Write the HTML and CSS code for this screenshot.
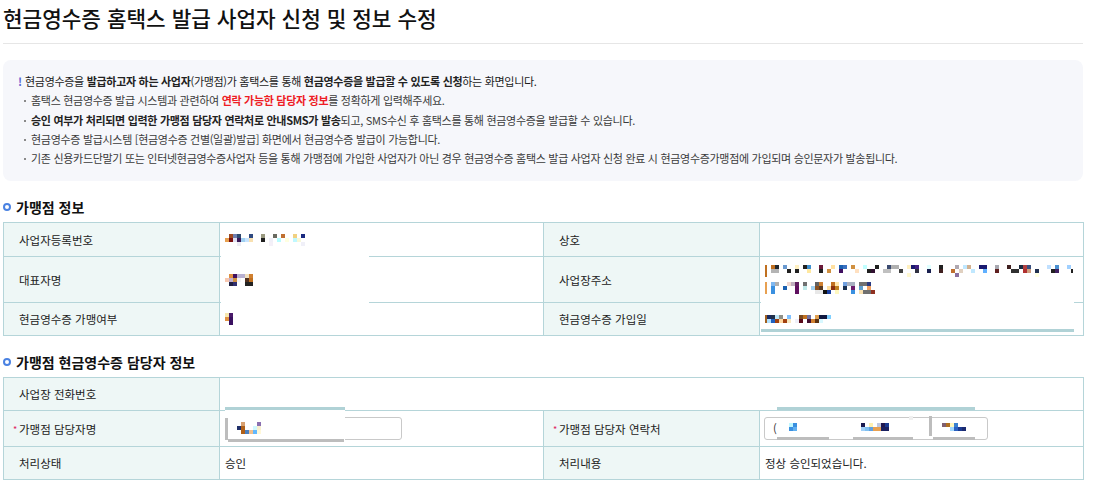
FILE: index.html
```html
<!DOCTYPE html>
<html lang="ko">
<head>
<meta charset="utf-8">
<title>현금영수증 홈택스 발급 사업자 신청 및 정보 수정</title>
<link rel="stylesheet" href="styles.css">
</head>
<body>
<div class="page">
  <h1 class="title">현금영수증 홈택스 발급 사업자 신청 및 정보 수정</h1>

  <div class="notice">
    <p class="lead"><span class="excl">!</span>현금영수증을 <b>발급하고자 하는 사업자</b>(가맹점)가 홈택스를 통해 <b>현금영수증을 발급할 수 있도록 신청</b>하는 화면입니다.</p>
    <ul class="bullets">
      <li>홈택스 현금영수증 발급 시스템과 관련하여 <b class="red">연락 가능한 담당자 정보</b>를 정확하게 입력해주세요.</li>
      <li><b>승인 여부가 처리되면 입력한 가맹점 담당자 연락처로 안내SMS가 발송</b>되고, SMS수신 후 홈택스를 통해 현금영수증을 발급할 수 있습니다.</li>
      <li>현금영수증 발급시스템 [현금영수증 건별(일괄)발급] 화면에서 현금영수증 발급이 가능합니다.</li>
      <li>기존 신용카드단말기 또는 인터넷현금영수증사업자 등을 통해 가맹점에 가입한 사업자가 아닌 경우 현금영수증 홈택스 발급 사업자 신청 완료 시 현금영수증가맹점에 가입되며 승인문자가 발송됩니다.</li>
    </ul>
  </div>

  <h2 class="sec"><span class="ring"></span>가맹점 정보</h2>
  <table class="grid">
    <colgroup><col class="c-l"><col class="c-v"><col class="c-l"><col class="c-v"></colgroup>
    <tr class="r1">
      <th>사업자등록번호</th>
      <td>
        <svg class="mz" width="84" height="12" shape-rendering="crispEdges">
          <rect x="4" y="0" width="4" height="4" fill="#a04a20"/><rect x="8" y="0" width="4" height="4" fill="#7080b0"/><rect x="12" y="0" width="4" height="4" fill="#2e4a70"/><rect x="24" y="0" width="4" height="4" fill="#2f4a80"/><rect x="36" y="0" width="4" height="4" fill="#9a9a80"/><rect x="48" y="0" width="4" height="4" fill="#6a6a60"/><rect x="56" y="0" width="4" height="4" fill="#c07030"/><rect x="68" y="0" width="4" height="4" fill="#f0d080"/><rect x="76" y="0" width="4" height="4" fill="#1a2a80"/>
          <rect x="0" y="4" width="4" height="4" fill="#e8a050"/><rect x="4" y="4" width="4" height="4" fill="#7a1010"/><rect x="8" y="4" width="4" height="4" fill="#e0e0f0"/><rect x="12" y="4" width="4" height="4" fill="#3a1a5a"/><rect x="16" y="4" width="4" height="4" fill="#a0d0f0"/><rect x="20" y="4" width="4" height="4" fill="#c8e4ff"/><rect x="24" y="4" width="4" height="4" fill="#f8e0b0"/><rect x="36" y="4" width="4" height="4" fill="#202020"/><rect x="44" y="4" width="4" height="4" fill="#f0f0f8"/><rect x="52" y="4" width="4" height="4" fill="#b8fcff"/><rect x="60" y="4" width="4" height="4" fill="#ffffe0"/><rect x="68" y="4" width="4" height="4" fill="#c0f8ff"/><rect x="72" y="4" width="4" height="4" fill="#f8f8d8"/>
          <rect x="12" y="8" width="4" height="4" fill="#ececf4"/><rect x="44" y="8" width="4" height="4" fill="#f4f0f8"/><rect x="76" y="8" width="4" height="4" fill="#f0f0f8"/>
        </svg>
      </td>
      <th>상호</th>
      <td></td>
    </tr>
    <tr class="r2">
      <th>대표자명</th>
      <td class="rel">
        <span class="patch p-rep"></span>
        <svg class="mz up" width="32" height="12" shape-rendering="crispEdges">
          <rect x="4" y="0" width="4" height="4" fill="#e09040"/><rect x="8" y="0" width="4" height="4" fill="#401060"/><rect x="12" y="0" width="8" height="4" fill="#b8b0d0"/><rect x="20" y="0" width="4" height="4" fill="#f0e0c0"/><rect x="24" y="0" width="4" height="4" fill="#d08030"/>
          <rect x="0" y="4" width="4" height="4" fill="#f8c8b0"/><rect x="4" y="4" width="4" height="4" fill="#c0b0d0"/><rect x="8" y="4" width="4" height="4" fill="#d09040"/><rect x="12" y="4" width="4" height="4" fill="#f4f4f8"/><rect x="20" y="4" width="4" height="4" fill="#503020"/><rect x="24" y="4" width="4" height="4" fill="#c07020"/>
          <rect x="4" y="8" width="4" height="4" fill="#202040"/><rect x="8" y="8" width="4" height="4" fill="#303070"/><rect x="20" y="8" width="8" height="4" fill="#222222"/>
        </svg>
      </td>
      <th>사업장주소</th>
      <td class="addr">
        <svg class="mz up" width="312" height="12" shape-rendering="crispEdges">
          <rect x="0" y="0" width="2" height="12" fill="#c07020"/>
          <rect x="6" y="0" width="4" height="4" fill="#c07020"/><rect x="10" y="0" width="4" height="4" fill="#202830"/><rect x="18" y="0" width="4" height="4" fill="#6a9ad0"/><rect x="30" y="0" width="4" height="4" fill="#fff0c0"/><rect x="38" y="0" width="4" height="4" fill="#202020"/><rect x="42" y="0" width="4" height="4" fill="#4090d0"/><rect x="54" y="0" width="4" height="4" fill="#6a1a3a"/><rect x="66" y="0" width="4" height="4" fill="#ffe0a0"/><rect x="74" y="0" width="4" height="4" fill="#1a60b0"/><rect x="78" y="0" width="4" height="4" fill="#3a70c0"/><rect x="86" y="0" width="4" height="4" fill="#d09040"/><rect x="98" y="0" width="4" height="4" fill="#c0ffff"/><rect x="110" y="0" width="4" height="4" fill="#202020"/><rect x="122" y="0" width="4" height="4" fill="#3a4a70"/><rect x="126" y="0" width="8" height="4" fill="#b0b0b0"/><rect x="142" y="0" width="4" height="4" fill="#fff0c0"/><rect x="146" y="0" width="4" height="4" fill="#1a1a70"/><rect x="150" y="0" width="4" height="4" fill="#402080"/><rect x="162" y="0" width="4" height="4" fill="#e0ffff"/><rect x="174" y="0" width="4" height="4" fill="#202020"/><rect x="190" y="0" width="4" height="4" fill="#b0a8b0"/><rect x="198" y="0" width="4" height="4" fill="#c0e8ff"/><rect x="202" y="0" width="4" height="4" fill="#d0b090"/><rect x="214" y="0" width="8" height="4" fill="#1a1a70"/><rect x="230" y="0" width="4" height="4" fill="#a8a8b0"/><rect x="242" y="0" width="4" height="4" fill="#402020"/><rect x="254" y="0" width="4" height="4" fill="#1a2a40"/><rect x="258" y="0" width="4" height="4" fill="#b04040"/><rect x="262" y="0" width="4" height="4" fill="#3a5080"/><rect x="282" y="0" width="4" height="4" fill="#c0e0ff"/><rect x="290" y="0" width="4" height="4" fill="#4a90d0"/><rect x="302" y="0" width="4" height="4" fill="#a0d0ff"/>
          <rect x="6" y="4" width="8" height="4" fill="#b4b4b4"/><rect x="22" y="4" width="4" height="4" fill="#202020"/><rect x="30" y="4" width="4" height="4" fill="#202020"/><rect x="42" y="4" width="4" height="4" fill="#ffe8a0"/><rect x="54" y="4" width="4" height="4" fill="#202020"/><rect x="62" y="4" width="4" height="4" fill="#d09040"/><rect x="74" y="4" width="4" height="4" fill="#401060"/><rect x="90" y="4" width="4" height="4" fill="#ffe0c0"/><rect x="102" y="4" width="4" height="4" fill="#202020"/><rect x="106" y="4" width="4" height="4" fill="#301030"/><rect x="118" y="4" width="8" height="4" fill="#c0c0c0"/><rect x="134" y="4" width="4" height="4" fill="#404040"/><rect x="150" y="4" width="4" height="4" fill="#303040"/><rect x="162" y="4" width="4" height="4" fill="#1a2050"/><rect x="174" y="4" width="4" height="4" fill="#402020"/><rect x="186" y="4" width="4" height="4" fill="#c07030"/><rect x="194" y="4" width="4" height="4" fill="#e0d0c0"/><rect x="206" y="4" width="4" height="4" fill="#c0e8ff"/><rect x="218" y="4" width="4" height="4" fill="#60b0ff"/><rect x="230" y="4" width="4" height="4" fill="#602020"/><rect x="246" y="4" width="8" height="4" fill="#303030"/><rect x="258" y="4" width="4" height="4" fill="#b03030"/><rect x="262" y="4" width="4" height="4" fill="#d0a080"/><rect x="270" y="4" width="4" height="4" fill="#203050"/><rect x="286" y="4" width="4" height="4" fill="#202020"/><rect x="290" y="4" width="4" height="4" fill="#402060"/><rect x="306" y="4" width="2" height="4" fill="#202020"/>
          <rect x="142" y="8" width="4" height="4" fill="#fff8d0"/><rect x="190" y="8" width="4" height="4" fill="#8a70a0"/><rect x="270" y="8" width="4" height="4" fill="#ffffe0"/>
        </svg>
        <svg class="mz up" width="112" height="12" shape-rendering="crispEdges">
          <rect x="0" y="0" width="2" height="12" fill="#e8a050"/>
          <rect x="6" y="0" width="4" height="4" fill="#80b8f0"/><rect x="10" y="0" width="4" height="4" fill="#b0b0b0"/><rect x="22" y="0" width="4" height="4" fill="#f0d8d0"/><rect x="26" y="0" width="4" height="4" fill="#c0b0c0"/><rect x="30" y="0" width="4" height="4" fill="#602060"/><rect x="38" y="0" width="4" height="4" fill="#707070"/><rect x="50" y="0" width="4" height="4" fill="#606060"/><rect x="54" y="0" width="4" height="4" fill="#d08030"/><rect x="66" y="0" width="4" height="4" fill="#c07020"/><rect x="70" y="0" width="4" height="4" fill="#ffe8b0"/><rect x="78" y="0" width="4" height="4" fill="#70a0e0"/><rect x="82" y="0" width="8" height="4" fill="#a8b0c0"/><rect x="94" y="0" width="8" height="4" fill="#707070"/><rect x="102" y="0" width="4" height="4" fill="#2a3a80"/>
          <rect x="6" y="4" width="4" height="4" fill="#3a90e0"/><rect x="18" y="4" width="4" height="4" fill="#1a60b0"/><rect x="30" y="4" width="4" height="4" fill="#601060"/><rect x="38" y="4" width="4" height="4" fill="#c0e8e8"/><rect x="46" y="4" width="4" height="4" fill="#a0d0f0"/><rect x="50" y="4" width="4" height="4" fill="#8a5020"/><rect x="54" y="4" width="4" height="4" fill="#5a3a20"/><rect x="62" y="4" width="4" height="4" fill="#ffe0a0"/><rect x="66" y="4" width="4" height="4" fill="#8a3010"/><rect x="70" y="4" width="4" height="4" fill="#c08020"/><rect x="78" y="4" width="4" height="4" fill="#1a3050"/><rect x="86" y="4" width="4" height="4" fill="#6a1a6a"/><rect x="94" y="4" width="4" height="4" fill="#60a0d0"/><rect x="102" y="4" width="4" height="4" fill="#f0a060"/>
          <rect x="6" y="8" width="4" height="4" fill="#3a90e0"/><rect x="30" y="8" width="4" height="4" fill="#601060"/><rect x="50" y="8" width="8" height="4" fill="#e8e8e8"/><rect x="58" y="8" width="4" height="4" fill="#101010"/><rect x="62" y="8" width="4" height="4" fill="#1a40a0"/><rect x="70" y="8" width="4" height="4" fill="#fff8c0"/><rect x="86" y="8" width="4" height="4" fill="#3a90e0"/><rect x="94" y="8" width="4" height="4" fill="#f8e0b0"/><rect x="98" y="8" width="8" height="4" fill="#707070"/><rect x="106" y="8" width="4" height="4" fill="#903020"/>
        </svg>
      </td>
    </tr>
    <tr class="r3">
      <th>현금영수증 가맹여부</th>
      <td>
        <svg class="mz up" width="12" height="12" shape-rendering="crispEdges">
          <rect x="0" y="0" width="4" height="4" fill="#f8e8b0"/><rect x="4" y="0" width="4" height="4" fill="#4a1a6a"/>
          <rect x="0" y="4" width="4" height="4" fill="#e09040"/><rect x="4" y="4" width="4" height="4" fill="#3a1060"/>
          <rect x="4" y="8" width="4" height="4" fill="#3a1060"/>
        </svg>
      </td>
      <th>현금영수증 가입일</th>
      <td class="rel">
        <span class="patch p-addr"></span>
        <svg class="mz up" width="68" height="8" shape-rendering="crispEdges">
          <rect x="0" y="0" width="2" height="8" fill="#a06020"/>
          <rect x="2" y="0" width="4" height="4" fill="#1a2a60"/><rect x="6" y="0" width="4" height="4" fill="#20304a"/><rect x="10" y="0" width="4" height="4" fill="#c0e8f8"/><rect x="14" y="0" width="4" height="4" fill="#909088"/><rect x="22" y="0" width="4" height="4" fill="#80c0ff"/><rect x="34" y="0" width="4" height="4" fill="#7a4a20"/><rect x="38" y="0" width="4" height="4" fill="#c07020"/><rect x="42" y="0" width="4" height="4" fill="#7070a0"/><rect x="50" y="0" width="4" height="4" fill="#e0a050"/><rect x="54" y="0" width="8" height="4" fill="#101840"/><rect x="62" y="0" width="4" height="4" fill="#80d0ff"/>
          <rect x="2" y="4" width="4" height="4" fill="#b0e0ff"/><rect x="6" y="4" width="4" height="4" fill="#2060c0"/><rect x="10" y="4" width="4" height="4" fill="#a04010"/><rect x="14" y="4" width="4" height="4" fill="#ffd8a0"/><rect x="18" y="4" width="4" height="4" fill="#a04010"/><rect x="22" y="4" width="4" height="4" fill="#f8e8c0"/><rect x="30" y="4" width="4" height="4" fill="#f0f0f8"/><rect x="34" y="4" width="4" height="4" fill="#5a0a1a"/><rect x="42" y="4" width="4" height="4" fill="#401030"/><rect x="46" y="4" width="4" height="4" fill="#d08030"/><rect x="50" y="4" width="4" height="4" fill="#5a3010"/><rect x="54" y="4" width="4" height="4" fill="#d8f8ff"/>
        </svg>
      </td>
    </tr>
  </table>

  <h2 class="sec"><span class="ring"></span>가맹점 현금영수증 담당자 정보</h2>
  <table class="grid">
    <colgroup><col class="c-l"><col class="c-v"><col class="c-l"><col class="c-v"></colgroup>
    <tr class="s1">
      <th>사업장 전화번호</th>
      <td colspan="3"></td>
    </tr>
    <tr class="s2">
      <th><span class="req">*</span>가맹점 담당자명</th>
      <td>
        <div class="field f-name">
          <span class="cover c-name"></span>
          <svg class="mz up fm" width="28" height="12" shape-rendering="crispEdges">
            <rect x="4" y="0" width="4" height="4" fill="#d8a070"/><rect x="20" y="0" width="4" height="4" fill="#8a70b0"/>
            <rect x="0" y="4" width="4" height="4" fill="#20306a"/><rect x="4" y="4" width="4" height="4" fill="#b06018"/><rect x="16" y="4" width="4" height="4" fill="#d0f8ff"/><rect x="20" y="4" width="4" height="4" fill="#f8f0d0"/>
            <rect x="4" y="8" width="4" height="4" fill="#b06018"/><rect x="8" y="8" width="4" height="4" fill="#4a80c0"/><rect x="12" y="8" width="4" height="4" fill="#f0c090"/><rect x="16" y="8" width="4" height="4" fill="#60b8ff"/><rect x="20" y="8" width="4" height="4" fill="#fff8d8"/>
          </svg>
        </div>
      </td>
      <th><span class="req">*</span>가맹점 담당자 연락처</th>
      <td>
        <div class="field f-phone">
          <span class="tbar"></span>
          <span class="paren">(</span>
          <svg class="mz pa" width="8" height="8" shape-rendering="crispEdges"><rect x="4" y="0" width="4" height="4" fill="#3a90e0"/><rect x="0" y="4" width="4" height="4" fill="#3a90e0"/><rect x="4" y="4" width="4" height="4" fill="#60b0f0"/><rect x="0" y="0" width="4" height="4" fill="#c0f8ff"/></svg>
          <span class="gbar g1"></span>
          <svg class="mz pb" width="28" height="8" shape-rendering="crispEdges"><rect x="0" y="0" width="4" height="4" fill="#1a1a50"/><rect x="8" y="0" width="4" height="4" fill="#fff0b0"/><rect x="16" y="0" width="4" height="4" fill="#c0c8e0"/><rect x="20" y="0" width="4" height="4" fill="#201850"/><rect x="24" y="0" width="4" height="4" fill="#1a3a90"/><rect x="0" y="4" width="4" height="4" fill="#a0d0f8"/><rect x="4" y="4" width="4" height="4" fill="#80c0f0"/><rect x="8" y="4" width="4" height="4" fill="#60a0e0"/><rect x="12" y="4" width="8" height="4" fill="#e8a050"/><rect x="20" y="4" width="8" height="4" fill="#1a2060"/></svg>
          <span class="gbar g2"></span>
          <span class="lsq"></span>
          <span class="vbar"></span>
          <svg class="mz pc" width="24" height="8" shape-rendering="crispEdges"><rect x="0" y="0" width="4" height="4" fill="#806070"/><rect x="4" y="0" width="4" height="4" fill="#b07020"/><rect x="8" y="0" width="4" height="4" fill="#fff8c0"/><rect x="12" y="0" width="4" height="4" fill="#3a80d0"/><rect x="8" y="4" width="4" height="4" fill="#a0d8ff"/><rect x="12" y="4" width="4" height="4" fill="#2a60c0"/><rect x="16" y="4" width="4" height="4" fill="#1a3a90"/><rect x="20" y="4" width="4" height="4" fill="#1a2a70"/></svg>
          <span class="gbar g3"></span>
        </div>
      </td>
    </tr>
    <tr class="s3">
      <th>처리상태</th>
      <td>승인</td>
      <th>처리내용</th>
      <td>정상 승인되었습니다.</td>
    </tr>
  </table>
</div>
</body>
</html>
```

FILE: styles.css
```css
html, body {
  margin: 0;
  padding: 0;
  background: #ffffff;
}

body {
  font-family: "Noto Sans CJK KR", "Noto Sans", sans-serif;
  color: #222222;
  overflow: hidden;
}

.page {
  width: 1080px;
  margin-left: 3px;
}

.title {
  margin: 0;
  font-size: 21.3px;
  font-weight: 500;
  line-height: 36px;
  color: #111111;
  padding-bottom: 7px;
  border-bottom: 1px solid #e6e6e6;
}

.notice {
  margin-top: 16px;
  background: #f6f7fb;
  border-radius: 8px;
  padding: 12px 0 13px 15px;
  font-size: 11px;
  letter-spacing: -0.3px;
  line-height: 19.3px;
  color: #3a3a3a;
}

.notice b {
  font-weight: 700;
  color: #222222;
}

.lead {
  margin: 0;
  color: #1a1a1a;
}

.excl {
  display: inline-block;
  width: 7px;
  color: #5b63d3;
  font-weight: 700;
}

.bullets {
  list-style: none;
  margin: 0;
  padding: 0;
}

.bullets li {
  position: relative;
  padding-left: 13px;
}

.bullets li::before {
  content: "";
  position: absolute;
  left: 6px;
  top: 9px;
  width: 2px;
  height: 2px;
  background: #8a8a8a;
}

.notice b.red {
  color: #ee1c25;
}

.sec {
  display: flex;
  align-items: center;
  gap: 5px;
  margin: 16px 0 5px;
  font-size: 14px;
  font-weight: 700;
  line-height: 20px;
  color: #111111;
}

.ring {
  width: 8px;
  height: 8px;
  box-sizing: border-box;
  border: 2px solid #4a82e2;
  border-radius: 50%;
}

.grid {
  width: 1080px;
  border-collapse: collapse;
  table-layout: fixed;
  font-size: 11.5px;
  color: #222222;
}

.c-l { width: 216px; }
.c-v { width: 324px; }

.grid th,
.grid td {
  border: 1px solid #b5d5d9;
  padding: 0;
  vertical-align: middle;
}

.grid th {
  background: #eef7f6;
  font-weight: 400;
  text-align: left;
  padding-left: 15px;
}

.grid td {
  padding-left: 5px;
}

.r1 { height: 34px; }
.r2 { height: 46px; }
.r3 { height: 33px; }
.s1 { height: 33px; }
.s2 { height: 36px; }
.s3 { height: 33px; }

.mz {
  display: block;
}

.up {
  position: relative;
  z-index: 2;
}

.addr .mz + .mz {
  margin-top: 5px;
}

.rel {
  position: relative;
}

.patch {
  position: absolute;
  background: #ffffff;
  z-index: 1;
}

.p-rep {
  left: 1px;
  top: -4px;
  width: 148px;
  height: 54px;
}

.p-addr {
  left: 1px;
  top: -44px;
  width: 313px;
  height: 70px;
  border-bottom: 3px solid #b0d2d6;
}

.req {
  display: inline-block;
  width: 6px;
  margin-left: -6px;
  color: #e0245e;
  font-size: 9px;
  vertical-align: 1px;
}

.field {
  position: relative;
  height: 23px;
  box-sizing: border-box;
  border: 1px solid #c9c9c9;
  border-radius: 3px;
  background: #ffffff;
}

.f-name {
  width: 177px;
}

.f-phone {
  width: 224px;
  margin-left: -1px;
}

.cover {
  position: absolute;
  left: -1px;
  top: -11px;
  width: 120px;
  height: 35px;
  box-sizing: border-box;
  background: #ffffff;
  border-top: 3px solid #b0d2d6;
}

.c-name::before {
  content: "";
  position: absolute;
  left: 0;
  top: 8px;
  width: 3px;
  height: 22px;
  background: #bdbdbd;
}

.c-name::after {
  content: "";
  position: absolute;
  left: 3px;
  bottom: 0;
  width: 116px;
  height: 3px;
  background: #bdbdbd;
}

.fm {
  position: absolute;
  left: 11px;
  top: 4px;
}

.tbar {
  position: absolute;
  left: 12px;
  top: -11px;
  width: 198px;
  height: 3px;
  background: #b0d2d6;
}

.paren {
  position: absolute;
  left: 8px;
  top: 2px;
  font-size: 11px;
  line-height: 16px;
  color: #333333;
}

.pa { position: absolute; left: 24px; top: 5px; }
.pb { position: absolute; left: 96px; top: 5px; }
.pc { position: absolute; left: 177px; top: 5px; }

.gbar {
  position: absolute;
  bottom: -1px;
  height: 3px;
  background: #bdbdbd;
}

.g1 { left: 12px; width: 52px; }
.g2 { left: 88px; width: 60px; }
.g3 { left: 168px; width: 42px; }

.lsq {
  position: absolute;
  left: 144px;
  top: -2px;
  width: 4px;
  height: 4px;
  background: #f0f0f0;
}

.vbar {
  position: absolute;
  left: 164px;
  top: -2px;
  width: 3px;
  height: 20px;
  background: #bdbdbd;
}
```
